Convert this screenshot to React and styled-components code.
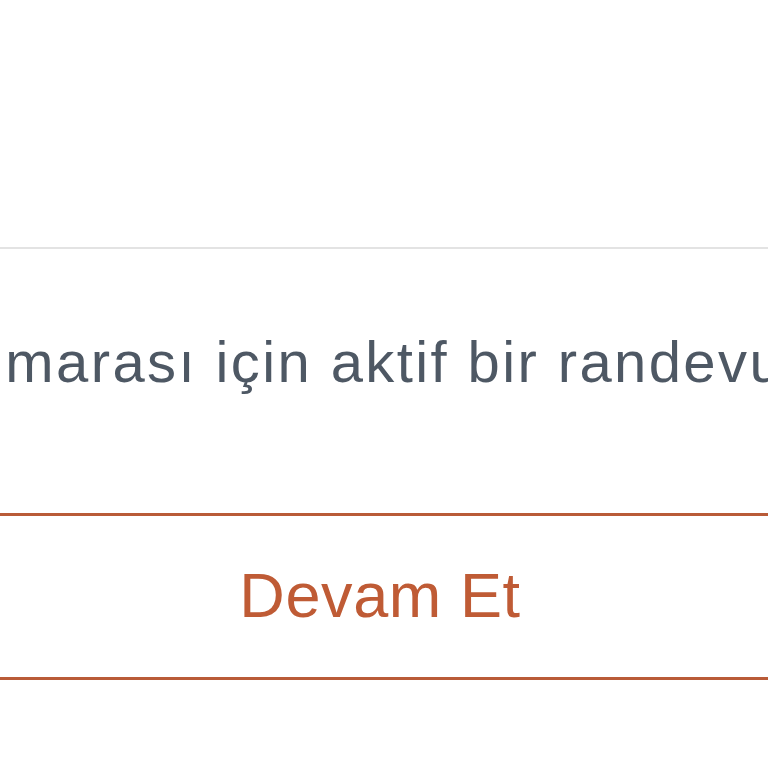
import React from "react";
import styled, { createGlobalStyle } from "styled-components";

const GlobalStyle = createGlobalStyle`
	html,
	body {
		margin: 0;
		padding: 0;
		background-color: #ffffff;
		overflow: hidden;
	}
	* {
		box-sizing: border-box;
	}
`;

const Wrapper = styled.div`
	width: 768px;
	height: 768px;
	background-color: #ffffff;
	font-family: "Liberation Sans", Arial, Helvetica, sans-serif;
	overflow: hidden;
	display: flex;
	flex-direction: column;
`;

const Header = styled.header`
	height: 249px;
	flex-shrink: 0;
	border-bottom: 2px solid #e3e3e3;
`;

const Message = styled.p`
	margin: 78px 0 0 -64px;
	font-size: 58px;
	line-height: 70px;
	letter-spacing: 2.4px;
	color: #4e5864;
	white-space: nowrap;
`;

const Button = styled.button`
	margin-top: 116px;
	width: 100%;
	height: 167px;
	flex-shrink: 0;
	display: flex;
	align-items: center;
	justify-content: center;
	padding: 0 8px 3px 0;
	background-color: #ffffff;
	border: none;
	border-top: 3px solid #b95b38;
	border-bottom: 3px solid #b95b38;
	color: #bf5b35;
	font-family: inherit;
	font-size: 63px;
	line-height: 1;
	letter-spacing: 0.6px;
	cursor: pointer;
`;

export default function App() {
	return (
		<>
			<GlobalStyle />
			<Wrapper>
				<Header />
				<Message>numarası için aktif bir randevu bulunmamaktadır.</Message>
				<Button type="button">Devam Et</Button>
			</Wrapper>
		</>
	);
}
